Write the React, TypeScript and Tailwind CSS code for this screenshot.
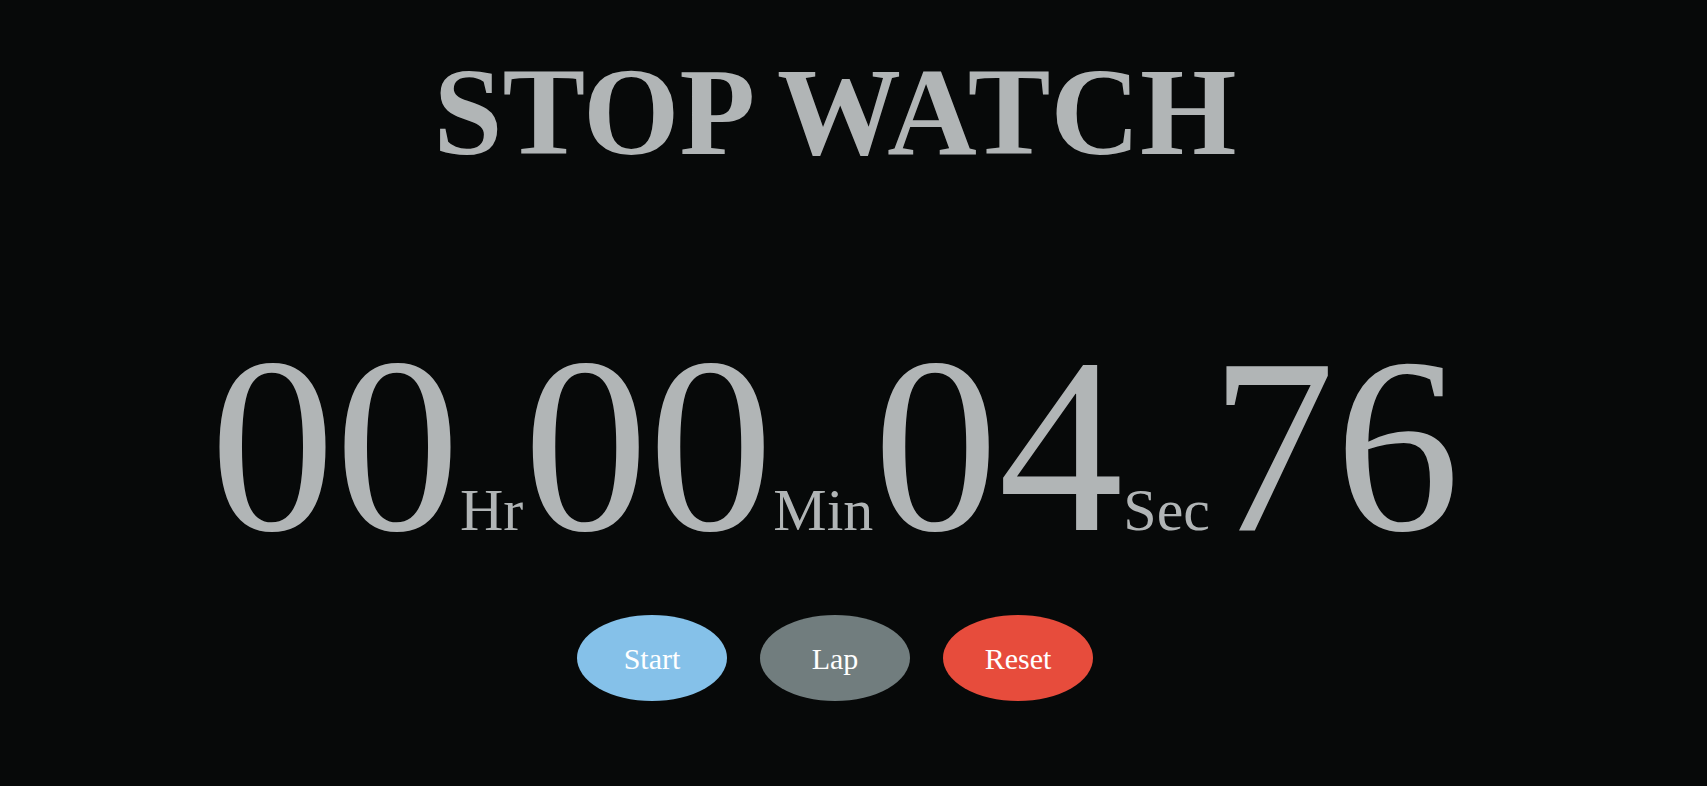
import { useState } from "react";

const serif = "font-['Liberation_Serif','Times_New_Roman',serif]";

function Unit({ value, label }: { value: string; label?: string }) {
  return (
    <>
      <span className="text-[250px] leading-none">{value}</span>
      {label && <span className="text-[60px] leading-none">{label}</span>}
    </>
  );
}

export default function App() {
  const [time] = useState({ hr: "00", min: "00", sec: "04", ms: "76" });

  return (
    <section className={`min-h-screen w-full bg-[#070909] text-[#b1b5b6] ${serif}`}>
      <div className="flex flex-col items-center pr-[37px]">
        {/* TITLE */}
        <h1 className="mt-[51px] text-[124px] font-bold leading-none">STOP WATCH</h1>

        {/* TIME DISPLAY */}
        <div className="mt-[146px] flex items-baseline">
          <Unit value={time.hr} label="Hr" />
          <Unit value={time.min} label="Min" />
          <Unit value={time.sec} label="Sec" />
          <Unit value={time.ms} />
        </div>

        {/* CONTROLS */}
        <div className="mt-[44px] flex gap-[33px]">
          <button className="h-[86px] w-[150px] rounded-[50%] bg-[#85c1e9] text-[30px] text-white">
            Start
          </button>
          <button className="h-[86px] w-[150px] rounded-[50%] bg-[#717d7e] text-[30px] text-white">
            Lap
          </button>
          <button className="h-[86px] w-[150px] rounded-[50%] bg-[#e74c3c] text-[30px] text-white">
            Reset
          </button>
        </div>
      </div>
    </section>
  );
}
